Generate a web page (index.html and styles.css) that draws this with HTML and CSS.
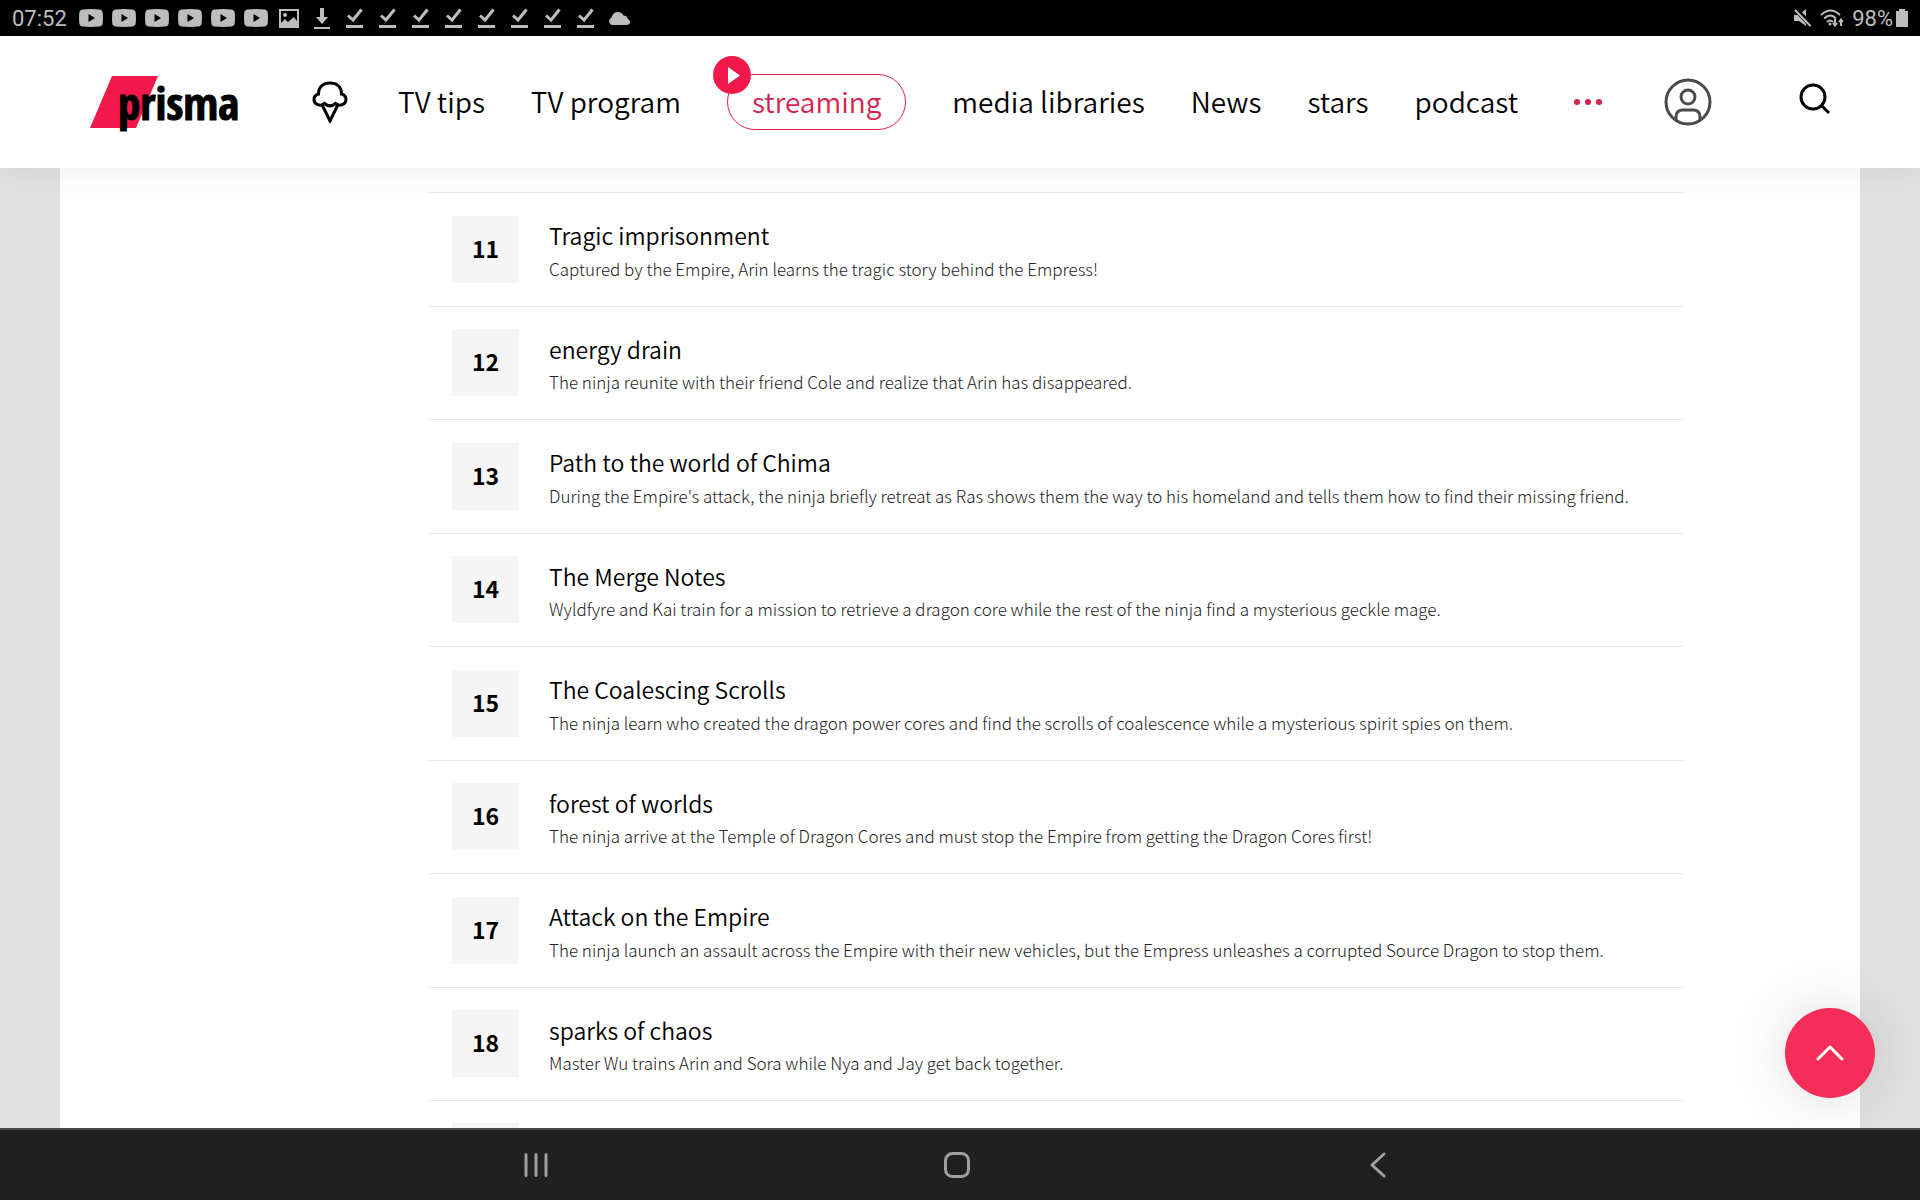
FILE: index.html
```html
<!DOCTYPE html>
<html lang="en">
<head>
    <meta charset="UTF-8" />
    <meta name="viewport" content="width=device-width, initial-scale=1.0"/>
    <title>prisma - streaming</title>

    <link rel="stylesheet" href="styles.css">
</head>
<body>
    <!-- icons used more than once -->
    <svg class="sprite" aria-hidden="true">
        <symbol id="video" viewBox="0 0 24 18">
            <path fill-rule="evenodd" d="M4 .5Q12-.3 20 .5 23.500.8 23.700 4q.5 5 0 10-.2 3.200-3.700 3.500-8 .8-16 0Q.5 17.200.3 14-.2 9 .3 4 .5.8 4 .5ZM9.500 5v8l6.500-4Z"/>
        </symbol>
        <symbol id="done" viewBox="0 0 18 21">
            <path d="M2 7.500 7 12 15.500 1.500" fill="none" stroke="currentColor" stroke-width="3"/>
            <path d="M0 17h17v3H0z"/>
        </symbol>
    </svg>

    <div class="statusbar">
        <span class="clock">07:52</span>
        <div class="notices">
            <span><svg width="24" height="18"><use href="#video"/></svg></span>
            <span><svg width="24" height="18"><use href="#video"/></svg></span>
            <span><svg width="24" height="18"><use href="#video"/></svg></span>
            <span><svg width="24" height="18"><use href="#video"/></svg></span>
            <span><svg width="24" height="18"><use href="#video"/></svg></span>
            <span><svg width="24" height="18"><use href="#video"/></svg></span>
            <span>
                <svg width="20" height="19" viewBox="0 0 20 19">
                    <path d="M1 1h18v17H1z" fill="none" stroke="currentColor" stroke-width="2"/>
                    <path d="M2 17v-3l4-4 3 3 6-5 3 4v5z"/>
                    <circle cx="6" cy="6" r="2"/>
                </svg>
            </span>
            <span>
                <svg width="16" height="21" viewBox="0 0 16 21">
                    <path d="M6 0h4v9h4l-6 7-6-7h4zM0 19h16v2H0z"/>
                </svg>
            </span>
            <span><svg width="18" height="21"><use href="#done"/></svg></span>
            <span><svg width="18" height="21"><use href="#done"/></svg></span>
            <span><svg width="18" height="21"><use href="#done"/></svg></span>
            <span><svg width="18" height="21"><use href="#done"/></svg></span>
            <span><svg width="18" height="21"><use href="#done"/></svg></span>
            <span><svg width="18" height="21"><use href="#done"/></svg></span>
            <span><svg width="18" height="21"><use href="#done"/></svg></span>
            <span><svg width="18" height="21"><use href="#done"/></svg></span>
            <span>
                <svg width="22" height="13" viewBox="0 0 22 13">
                    <path d="M4 13a4 4 0 0 1-.5-7.500Q5 0 10 0q4 0 5.500 3.500Q19 3.500 19.500 6.500 22 7.500 22 10q0 3-3.500 3z"/>
                </svg>
            </span>
        </div>
        <div class="system">
            <svg width="18" height="18" viewBox="0 0 18 18">
                <path d="M0 6h4l8-6v17l-7-5H0z"/>
                <path d="M2 .5 17.500 17" stroke="#000" stroke-width="5"/>
                <path d="M1 1 16.500 17" stroke="currentColor" stroke-width="2"/>
            </svg>
            <svg width="24" height="18" viewBox="0 0 24 18">
                <path d="M1 6q9.500-9 19 0M4 9.500q6.500-6 12 0M7 13q3-3 6 0" fill="none" stroke="currentColor" stroke-width="2"/>
                <circle cx="10" cy="15" r="1.500"/>
                <path d="M15 10v6M13 14l2 2.500 2-2.500M21 17v-6M19 13l2-2.500 2 2.500" fill="none" stroke="currentColor" stroke-width="2"/>
            </svg>
            <span class="charge">98%
                <svg width="12" height="18" viewBox="0 0 12 18">
                    <path d="M3 0h6v2h3v16H0V2h3z"/>
                </svg>
            </span>
        </div>
    </div>

    <header class="header">
        <a class="logo" href="#" aria-label="prisma">
            <svg width="150" height="52" viewBox="0 0 150 52">
                <path d="M22 0h46L46 52H0z" fill="#f2184a"/>
                <text x="28" y="44">prisma</text>
            </svg>
        </a>
        <nav class="menu">
            <a class="summer" href="#" aria-label="Summer">
                <svg class="cone" width="36" height="42" viewBox="0 0 36 42">
                    <path d="M6.500 13C6.500 6 11 2 18 2s11.500 4 11.500 11C33 14 34 16 34 18.500c0 5-6.500 7.500-10.500 4C20 25.500 16 25.500 12.500 22.500c-4 3.500-10.500 1-10.500-4 0-2.500 1-4.500 4.500-5.500Z"/>
                    <path d="M10 23.500 18 40l8-16.500"/>
                </svg>
            </a>
            <a href="#">TV tips</a>
            <a href="#">TV program</a>
            <a class="pill" href="#">streaming
                <svg class="play" width="38" height="38" viewBox="0 0 38 38">
                    <circle cx="19" cy="19" r="19" fill="#f2184a"/>
                    <path d="M15 11v17l12-8.500z" fill="#fff"/>
                </svg>
            </a>
            <a href="#">media libraries</a>
            <a href="#">News</a>
            <a href="#">stars</a>
            <a href="#">podcast</a>
        </nav>
        <div class="tools">
            <button type="button" aria-label="More">
                <svg width="28" height="6" viewBox="0 0 28 6" fill="#d81f4c">
                    <circle cx="3" cy="3" r="3"/><circle cx="14" cy="3" r="3"/><circle cx="25" cy="3" r="3"/>
                </svg>
            </button>
            <button type="button" aria-label="Account">
                <svg class="user" width="48" height="48" viewBox="0 0 48 48">
                    <circle cx="24" cy="24" r="22"/>
                    <circle cx="24" cy="19" r="7"/>
                    <path d="M12 42v-3q0-7 7-7h10q7 0 7 7v3"/>
                </svg>
            </button>
            <button class="find" type="button" aria-label="Search">
                <svg width="32" height="38" viewBox="0 0 32 38" fill="none" stroke="#000" stroke-width="3">
                    <circle cx="15" cy="14" r="12"/>
                    <path d="m23.500 22.500 7.500 7.500"/>
                </svg>
            </button>
        </div>
    </header>

    <main class="page">
        <ol class="episodes">
            <li>
                <span class="number">11</span>
                <div class="text">
                    <h3>Tragic imprisonment</h3>
                    <p>Captured by the Empire, Arin learns the tragic story behind the Empress!</p>
                </div>
            </li>
            <li>
                <span class="number">12</span>
                <div class="text">
                    <h3>energy drain</h3>
                    <p>The ninja reunite with their friend Cole and realize that Arin has disappeared.</p>
                </div>
            </li>
            <li>
                <span class="number">13</span>
                <div class="text">
                    <h3>Path to the world of Chima</h3>
                    <p>During the Empire's attack, the ninja briefly retreat as Ras shows them the way to his homeland and tells them how to find their missing friend.</p>
                </div>
            </li>
            <li>
                <span class="number">14</span>
                <div class="text">
                    <h3>The Merge Notes</h3>
                    <p>Wyldfyre and Kai train for a mission to retrieve a dragon core while the rest of the ninja find a mysterious geckle mage.</p>
                </div>
            </li>
            <li>
                <span class="number">15</span>
                <div class="text">
                    <h3>The Coalescing Scrolls</h3>
                    <p>The ninja learn who created the dragon power cores and find the scrolls of coalescence while a mysterious spirit spies on them.</p>
                </div>
            </li>
            <li>
                <span class="number">16</span>
                <div class="text">
                    <h3>forest of worlds</h3>
                    <p>The ninja arrive at the Temple of Dragon Cores and must stop the Empire from getting the Dragon Cores first!</p>
                </div>
            </li>
            <li>
                <span class="number">17</span>
                <div class="text">
                    <h3>Attack on the Empire</h3>
                    <p>The ninja launch an assault across the Empire with their new vehicles, but the Empress unleashes a corrupted Source Dragon to stop them.</p>
                </div>
            </li>
            <li>
                <span class="number">18</span>
                <div class="text">
                    <h3>sparks of chaos</h3>
                    <p>Master Wu trains Arin and Sora while Nya and Jay get back together.</p>
                </div>
            </li>
            <li>
                <span class="number"></span>
            </li>
        </ol>
    </main>

    <button class="totop" type="button" aria-label="Back to top">
        <svg width="28" height="16" viewBox="0 0 28 16">
            <path d="M2 14 14 2l12 12"/>
        </svg>
    </button>

    <div class="navbar">
        <button type="button" aria-label="Recent apps">
            <svg width="24" height="26" viewBox="0 0 24 26"><path d="M2 2.500v21M12 2.500v21M22 2.500v21"/></svg>
        </button>
        <button type="button" aria-label="Home">
            <svg width="26" height="26" viewBox="0 0 26 26"><rect x="1.500" y="1.500" width="23" height="23" rx="7"/></svg>
        </button>
        <button type="button" aria-label="Back">
            <svg width="16" height="26" viewBox="0 0 16 26"><path d="M14 2 2 13l12 11"/></svg>
        </button>
    </div>
</body>
</html>
```
FILE: styles.css
```css
* {
    box-sizing: border-box;
}

body {
    margin: 0;
    height: 100vh;
    display: flex;
    flex-direction: column;
    overflow: hidden;
    background: #e1e1e1;
    color: #000;
    font-family: "Noto Sans CJK SC", "Noto Sans", sans-serif;
}

a {
    color: inherit;
    text-decoration: none;
}

button {
    display: flex;
    align-items: center;
    justify-content: center;
    padding: 0;
    border: none;
    background: none;
    cursor: pointer;
}

svg {
    display: block;
}

.sprite {
    display: none;
}

/* status bar */
.statusbar {
    flex: none;
    display: flex;
    align-items: center;
    height: 36px;
    padding: 0 12px;
    background: #000;
    color: #c0c0c0;
    fill: #c0c0c0;
    font-family: Roboto, sans-serif;
    font-size: 22px;
    font-weight: 400;
}

.clock {
    width: 62px;
}

.notices {
    display: flex;
}

.notices span {
    display: flex;
    align-items: center;
    justify-content: center;
    width: 33px;
    height: 36px;
}

.system {
    display: flex;
    align-items: center;
    gap: 8px;
    margin-left: auto;
}

.charge {
    display: flex;
    align-items: center;
    gap: 3px;
}

/* header */
.header {
    position: relative;
    z-index: 1;
    flex: none;
    display: flex;
    align-items: center;
    height: 132px;
    padding: 0 90px;
    background: #fff;
    box-shadow: 0 0 36px rgba(0, 0, 0, 0.08);
}

.logo {
    margin-right: 72px;
}

.logo svg {
    overflow: visible;
}

.logo text {
    font-family: "Open Sans Condensed", "Open Sans", sans-serif;
    font-size: 45px;
    font-weight: 700;
    stroke: #000;
    stroke-width: 1px;
}

.menu {
    display: flex;
    align-items: center;
    gap: 46px;
    font-size: 28px;
    font-weight: 350;
    white-space: nowrap;
}

.menu a {
    padding-bottom: 2px;
}

.menu .summer {
    margin-right: 4px;
    padding: 0;
}

.cone {
    fill: none;
    stroke: #000;
    stroke-width: 3px;
}

.menu .pill {
    position: relative;
    padding: 0 24px 2px;
    border: 1px solid #d81f4c;
    border-radius: 28px;
    color: #d81f4c;
    line-height: 52px;
}

.play {
    position: absolute;
    top: -19px;
    left: -15px;
}

.tools {
    display: flex;
    align-items: center;
    gap: 62px;
    margin-left: auto;
}

.user {
    fill: none;
    stroke: #4a4a4a;
    stroke-width: 3px;
}

.find {
    margin-left: 24px;
}

/* episode list */
.page {
    flex: 1;
    min-height: 0;
    margin: 0 60px;
    padding: 24px 177px 0 369px;
    overflow: hidden;
    background: #fff;
}

.episodes {
    margin: 0;
    padding: 0;
    list-style: none;
}

.episodes li {
    display: flex;
    align-items: center;
    gap: 30px;
    padding: 22px 23px;
    border-top: 1px solid #e6e6e6;
}

.number {
    flex: none;
    width: 67px;
    height: 67px;
    background: #f5f5f5;
    font-size: 23px;
    font-weight: 700;
    line-height: 64px;
    text-align: center;
}

.text {
    padding-top: 3px;
}

h3 {
    margin: 0;
    font-size: 23px;
    font-weight: 350;
    line-height: 1.5;
}

p {
    margin: 0;
    color: #222;
    font-size: 17px;
    font-weight: 300;
    line-height: 31px;
    white-space: nowrap;
}

.totop {
    position: fixed;
    right: 45px;
    bottom: 102px;
    z-index: 1;
    width: 90px;
    height: 90px;
    border-radius: 50%;
    background: #f42d59;
    box-shadow: 0 0 60px rgba(0, 0, 0, 0.15);
}

.totop path {
    fill: none;
    stroke: #fff;
    stroke-width: 3px;
    stroke-linecap: round;
    stroke-linejoin: round;
}

/* system navigation */
.navbar {
    position: relative;
    z-index: 2;
    flex: none;
    display: flex;
    align-items: center;
    justify-content: center;
    gap: 361px;
    height: 72px;
    padding-right: 6px;
    border-top: 2px solid #484848;
    background: #202020;
}

.navbar button {
    width: 60px;
    height: 60px;
}

.navbar svg {
    fill: none;
    stroke: #a0a0a0;
    stroke-width: 3px;
    stroke-linecap: round;
    stroke-linejoin: round;
}
```
